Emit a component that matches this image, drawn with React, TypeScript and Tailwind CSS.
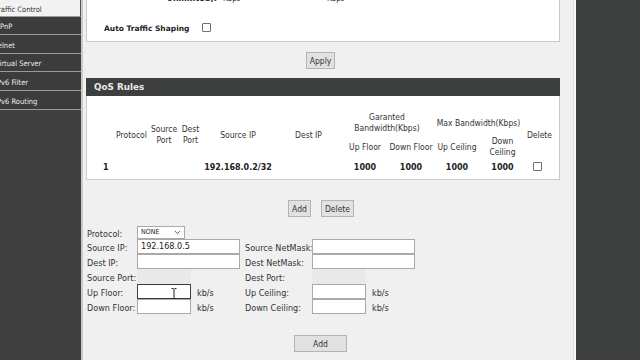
import React from "react";

const cond = "font-['DejaVu_Sans_Condensed','DejaVu_Sans',sans-serif] font-stretch-condensed";
const boldf = "font-['DejaVu_Sans',sans-serif] font-bold";

const sideItems = [
  { t: "Traffic Control", h: "h-[17px]", sel: true },
  { t: "UPnP", h: "h-[18px]", sel: false },
  { t: "Telnet", h: "h-[19px]", sel: false },
  { t: "Virtual Server", h: "h-[18px]", sel: false },
  { t: "IPv6 Filter", h: "h-[19px]", sel: false },
  { t: "IPv6 Routing", h: "h-[19px]", sel: false },
];

function Checkbox() {
  return <div className="w-[9px] h-[9px] bg-white border border-[#707070] rounded-[1px]" />;
}

function Btn({ w, h, children }: { w: string; h: string; children: React.ReactNode }) {
  return (
    <div
      className={`${w} ${h} shrink-0 flex items-center justify-center pt-[1px] bg-[#e1e1e1] border border-[#b4b4b4] text-[8.5px] text-[#333] ${cond}`}
    >
      {children}
    </div>
  );
}

function Input({ w, value, disabled, focused, cursor }: { w: string; value?: string; disabled?: boolean; focused?: boolean; cursor?: boolean }) {
  const cls = disabled
    ? "bg-[#e9e9e9] border border-[#e9e9e9]"
    : focused
    ? "bg-white border border-[#3c3c3c]"
    : "bg-white border border-[#a9a9a9]";
  return (
    <div className={`${w} h-full shrink-0 relative flex items-center pl-[3px] pt-[1px] text-[9px] text-[#222] ${cond} ${cls}`}>
      {value}
      {cursor && (
        <svg className="absolute left-[33px] top-[3px]" width="6" height="11" viewBox="0 0 6 11">
          <path d="M0.5 0.5h2M3.5 0.5h2M3 1v9M0.5 10.5h2M3.5 10.5h2" stroke="#222" strokeWidth="1" fill="none" />
        </svg>
      )}
    </div>
  );
}

function Label({ w, children }: { w: string; children: React.ReactNode }) {
  return <div className={`${w} shrink-0 pt-[3px] text-[9px] leading-[11px] text-[#333] whitespace-nowrap ${cond}`}>{children}</div>;
}

function Kbs() {
  return <div className={`ml-[6px] pt-[3px] text-[9px] leading-[11px] text-[#333] ${cond}`}>kb/s</div>;
}

export default function App() {
  const th = `text-[8.5px] leading-[11px] text-[#333] text-center whitespace-nowrap ${cond}`;
  const td = `text-[8px] leading-[11px] text-[#222] ${boldf}`;
  return (
    <div className="w-[640px] h-[360px] overflow-hidden flex bg-[#f0f0f0]">
      {/* Sidebar */}
      <aside className="w-[81px] shrink-0 h-full bg-[#3f403f] flex flex-col">
        {sideItems.map((it) => (
          <div
            key={it.t}
            className={`${it.h} shrink-0 border-b border-[#9a9a9a] flex items-center pt-[3px] overflow-hidden ${
              it.sel ? "bg-[#f2f2f2] text-[#333] border-r border-r-[#555]" : "bg-[#3b3c3b] text-[#ececec]"
            }`}
          >
            <span className={`ml-[-5px] whitespace-nowrap text-[7.5px] leading-[10px] ${cond}`}>{it.t}</span>
          </div>
        ))}
      </aside>
      <div className="w-[2px] shrink-0 bg-[#c9c9c9]" />

      {/* Main */}
      <main className="w-[490px] shrink-0 h-full flex flex-col pl-[3px]">
        {/* Top panel */}
        <div className="w-[474px] mt-[-10px] bg-white border-x border-b border-[#c9c9c9] flex flex-col">
          <div className="h-[14px] flex items-end">
            <div className={`w-[130px] text-right text-[8px] leading-[10px] text-[#222] ${boldf}`}>Unlimited):</div>
            <div className={`w-[110px] pl-[6px] text-[8px] leading-[10px] text-[#333] ${cond}`}>Kbps</div>
            <div className={`text-[8px] leading-[10px] text-[#333] ${cond}`}>Kbps</div>
          </div>
          <div className="h-[10px] mt-[18px] mb-[9px] pl-[17px] flex items-center">
            <div className={`w-[98px] pt-[3px] text-[7.5px] leading-[10px] text-[#222] whitespace-nowrap ${boldf}`}>Auto Traffic Shaping</div>
            <Checkbox />
          </div>
        </div>

        {/* Apply */}
        <div className="mt-[10px] ml-[220px] flex">
          <Btn w="w-[29px]" h="h-[17px]">Apply</Btn>
        </div>

        {/* QoS panel */}
        <div className="w-[474px] mt-[9px] flex flex-col">
          <div className={`h-[18px] bg-[#3d3e3e] flex items-center pl-[8px] pt-[1px] text-[8.8px] text-[#e9e9e9] ${boldf}`}>QoS Rules</div>
          <div className="bg-white border-x border-b border-[#c9c9c9] pt-[15px] pb-[5px]">
            <div className="grid grid-cols-[29px_31px_34px_19px_76px_65px_48px_44px_48px_43px_31px] grid-rows-[24px_24px_15px]">
              <div className={`col-start-2 row-start-1 row-span-2 flex items-center justify-center ${th}`}>Protocol</div>
              <div className={`col-start-3 row-start-1 row-span-2 flex items-center justify-center ${th}`}>
                <span>Source<br />Port</span>
              </div>
              <div className={`col-start-4 row-start-1 row-span-2 flex items-center justify-center ${th}`}>
                <span>Dest<br />Port</span>
              </div>
              <div className={`col-start-5 row-start-1 row-span-2 flex items-center justify-center ${th}`}>Source IP</div>
              <div className={`col-start-6 row-start-1 row-span-2 flex items-center justify-center ${th}`}>Dest IP</div>
              <div className={`col-start-7 col-span-2 row-start-1 flex items-center justify-center ${th}`}>
                <span>Garanted<br />Bandwidth(Kbps)</span>
              </div>
              <div className={`col-start-9 col-span-2 row-start-1 flex items-center justify-center ${th}`}>Max Bandwidth(Kbps)</div>
              <div className={`col-start-11 row-start-1 row-span-2 flex items-center justify-center ${th}`}>Delete</div>
              <div className={`col-start-7 row-start-2 flex items-center justify-center ${th}`}>Up Floor</div>
              <div className={`col-start-8 row-start-2 flex items-center justify-center ${th}`}>Down Floor</div>
              <div className={`col-start-9 row-start-2 flex items-center justify-center ${th}`}>Up Ceiling</div>
              <div className={`col-start-10 row-start-2 flex items-center justify-center ${th}`}>
                <span>Down<br />Ceiling</span>
              </div>

              <div className={`col-start-1 row-start-3 flex items-center pl-[16px] pt-[1px] ${td}`}>1</div>
              <div className={`col-start-5 row-start-3 flex items-center justify-center pt-[1px] ${td}`}>192.168.0.2/32</div>
              <div className={`col-start-7 row-start-3 flex items-center justify-center pt-[1px] ${td}`}>1000</div>
              <div className={`col-start-8 row-start-3 flex items-center justify-center pt-[1px] ${td}`}>1000</div>
              <div className={`col-start-9 row-start-3 flex items-center justify-center pt-[1px] ${td}`}>1000</div>
              <div className={`col-start-10 row-start-3 flex items-center justify-center pt-[1px] ${td}`}>1000</div>
              <div className="col-start-11 row-start-3 flex items-center justify-center pr-[4px] pb-[1px]">
                <Checkbox />
              </div>
            </div>
          </div>
        </div>

        {/* Add / Delete */}
        <div className="mt-[20px] ml-[202px] flex gap-[10px]">
          <Btn w="w-[23px]" h="h-[17px]">Add</Btn>
          <Btn w="w-[33px]" h="h-[17px]">Delete</Btn>
        </div>

        {/* Form */}
        <div className="mt-[9px] flex flex-col pl-[1px]">
          <div className="h-[13px] flex items-center">
            <Label w="w-[50px]">Protocol:</Label>
            <div className={`w-[48px] h-full bg-white border border-[#a9a9a9] flex items-center justify-between pl-[3px] pr-[3px] text-[7px] text-[#222] ${cond}`}>
              <span>NONE</span>
              <svg width="7" height="5" viewBox="0 0 7 5">
                <path d="M0.8 1l2.7 2.6L6.2 1" stroke="#555" strokeWidth="1" fill="none" />
              </svg>
            </div>
          </div>
          <div className="h-[15px] flex items-center">
            <Label w="w-[50px]">Source IP:</Label>
            <div className="w-[108px] h-full flex"><Input w="w-[103px]" value="192.168.0.5" /></div>
            <Label w="w-[67px]">Source NetMask:</Label>
            <div className="h-full flex"><Input w="w-[103px]" /></div>
          </div>
          <div className="h-[15px] flex items-center">
            <Label w="w-[50px]">Dest IP:</Label>
            <div className="w-[108px] h-full flex"><Input w="w-[103px]" /></div>
            <Label w="w-[67px]">Dest NetMask:</Label>
            <div className="h-full flex"><Input w="w-[103px]" /></div>
          </div>
          <div className="h-[15px] flex items-center">
            <Label w="w-[50px]">Source Port:</Label>
            <div className="w-[108px] h-full flex"><Input w="w-[54px]" disabled /></div>
            <Label w="w-[67px]">Dest Port:</Label>
            <div className="h-full flex"><Input w="w-[54px]" disabled /></div>
          </div>
          <div className="h-[15px] flex items-center">
            <Label w="w-[50px]">Up Floor:</Label>
            <div className="w-[108px] h-full flex items-center"><Input w="w-[54px]" focused cursor /><Kbs /></div>
            <Label w="w-[67px]">Up Ceiling:</Label>
            <div className="h-full flex items-center"><Input w="w-[54px]" /><Kbs /></div>
          </div>
          <div className="h-[15px] flex items-center">
            <Label w="w-[50px]">Down Floor:</Label>
            <div className="w-[108px] h-full flex items-center"><Input w="w-[54px]" /><Kbs /></div>
            <Label w="w-[67px]">Down Ceiling:</Label>
            <div className="h-full flex items-center"><Input w="w-[54px]" /><Kbs /></div>
          </div>
        </div>

        {/* Bottom Add */}
        <div className="mt-[21px] ml-[208px] flex">
          <Btn w="w-[53px]" h="h-[17px]">Add</Btn>
        </div>
      </main>

      <div className="w-[3px] shrink-0 bg-[#f8f8f8] border-l border-[#dedede]" />
      <div className="flex-1 h-full bg-[#3f4040]" />
    </div>
  );
}
